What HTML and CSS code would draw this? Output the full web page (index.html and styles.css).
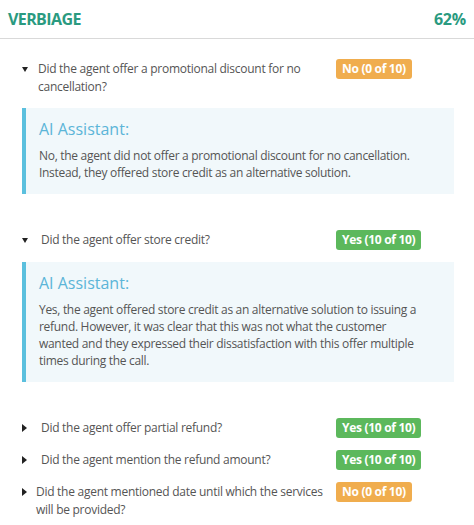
FILE: index.html
```html
<!DOCTYPE html>
<html>
<head>
<meta charset="utf-8">
<link rel="stylesheet" href="styles.css">
</head>
<body>
<div class="header">
  <span class="title">VERBIAGE</span>
  <span class="score">62%</span>
</div>
<div class="list">
  <div class="q-row">
    <span class="caret caret-down"></span>
    <div class="q-text">Did the agent offer a promotional discount for no cancellation?</div>
    <span class="badge badge-no">No (0 of 10)</span>
  </div>
  <div class="ai-box">
    <div class="ai-title">AI Assistant:</div>
    <div class="ai-body">No, the agent did not offer a promotional discount for no cancellation. Instead, they offered store credit as an alternative solution.</div>
  </div>

  <div class="q-row">
    <span class="caret caret-down"></span>
    <div class="q-text indent">Did the agent offer store credit?</div>
    <span class="badge badge-yes">Yes (10 of 10)</span>
  </div>
  <div class="ai-box">
    <div class="ai-title">AI Assistant:</div>
    <div class="ai-body">Yes, the agent offered store credit as an alternative solution to issuing a refund. However, it was clear that this was not what the customer wanted and they expressed their dissatisfaction with this offer multiple times during the call.</div>
  </div>

  <div class="q-row">
    <span class="caret caret-right"></span>
    <div class="q-text indent">Did the agent offer partial refund?</div>
    <span class="badge badge-yes">Yes (10 of 10)</span>
  </div>
  <div class="q-row">
    <span class="caret caret-right"></span>
    <div class="q-text indent">Did the agent mention the refund amount?</div>
    <span class="badge badge-yes">Yes (10 of 10)</span>
  </div>
  <div class="q-row">
    <span class="caret caret-right"></span>
    <div class="q-text tight">Did the agent mentioned date until which the services will be provided?</div>
    <span class="badge badge-no">No (0 of 10)</span>
  </div>
</div>
</body>
</html>
```
FILE: styles.css
```css
* { box-sizing: border-box; }
body {
  margin: 0;
  background: #fff;
  font-family: "Open Sans", "Liberation Sans", sans-serif;
  color: #555;
}
.header {
  display: flex;
  justify-content: space-between;
  align-items: center;
  height: 39px;
  padding: 0 8px 0 8px;
  border-bottom: 1px solid #d9d9d9;
  color: #2a9a80;
  font-weight: 700;
  font-size: 16px;
}
.title { letter-spacing: -0.6px; }
.score { letter-spacing: -0.2px; }
.list {
  padding: 20px 20px 0 22px;
}
.q-row {
  display: grid;
  grid-template-columns: 16px 298px auto;
  align-items: start;
  margin-bottom: 12px;
}
.caret {
  width: 0;
  height: 0;
  margin-top: 8px;
  border-style: solid;
}
.caret-down {
  border-width: 5px 3.5px 0 3.5px;
  border-color: #222 transparent transparent transparent;
}
.caret-right {
  margin-top: 6px;
  border-width: 4px 0 4px 5px;
  border-color: transparent transparent transparent #222;
}
.q-text {
  font-size: 12px;
  line-height: 18px;
  letter-spacing: -0.27px;
  padding-right: 10px;
  margin-top: 1px;
}
.q-text.indent { padding-left: 3px; }
.q-text.tight { margin-left: -2px; }
.badge {
  justify-self: start;
  height: 20px;
  line-height: 20px;
  padding: 0 6px;
  border-radius: 3px;
  color: #fff;
  font-weight: 700;
  font-size: 12px;
  letter-spacing: -0.3px;
  white-space: nowrap;
}
.badge-no { background: #f0ad4e; }
.badge-yes { background: #5cb85c; }
.ai-box {
  margin-top: 1px;
  margin-bottom: 36px;
  background: #f1f8fb;
  border-left: 4px solid #5bc0de;
  padding: 11px 34px 13px 13px;
}
.ai-title {
  color: #5bb5d8;
  font-size: 16px;
  line-height: 20px;
  margin-bottom: 8px;
}
.ai-body {
  font-size: 12px;
  line-height: 17px;
  letter-spacing: -0.3px;
}
```
